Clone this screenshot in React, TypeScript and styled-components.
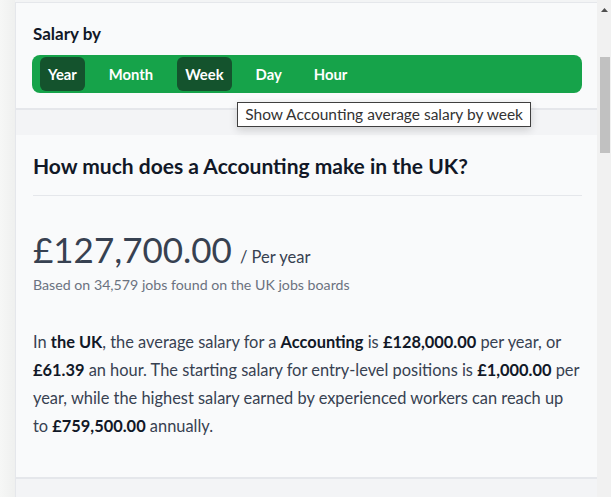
import React from "react";
import styled, { createGlobalStyle } from "styled-components";

const GlobalStyle = createGlobalStyle`
  html, body {
    margin: 0;
    padding: 0;
  }
  body {
    background: #f3f4f5;
    font-family: Lato, "Open Sans", sans-serif;
    color: #374151;
  }
`;

const Page = styled.div`
  padding: 2px 14px 0 15px;
  background: linear-gradient(to right, #f6f7f6 0, #eff0ef 15px, #f3f4f5 15px);
`;

const Column = styled.main`
  display: flex;
  flex-direction: column;
  gap: 25px;
  min-height: 2400px;
  background: #f3f4f6;
  border-left: 1px solid #e5e7eb;
  border-top: 1px solid #e5e7eb;
`;

const Card = styled.section<{ $pad: string }>`
  background: #f9fafb;
  border-bottom: 2px solid #e5e7eb;
  padding: ${({ $pad }) => $pad};
`;

const FilterTitle = styled.h3`
  margin: 0;
  font-size: 17px;
  line-height: 24px;
  font-weight: 700;
  color: #111827;
`;

const FilterBar = styled.div`
  display: flex;
  align-items: center;
  gap: 16px;
  margin: 9px 0 0 -1px;
  padding: 2px 8px;
  background: #16a34a;
  border-radius: 8px;
`;

const FilterButton = styled.button<{ $active?: boolean }>`
  position: relative;
  height: 34px;
  padding: 0 8px;
  border: 0;
  border-radius: 6px;
  background: ${({ $active }) => ($active ? "#14532d" : "transparent")};
  color: #ffffff;
  font-family: inherit;
  font-size: 14.8px;
  font-weight: 700;
  cursor: pointer;
`;

const Tooltip = styled.span`
  position: absolute;
  top: calc(100% + 11px);
  left: 60px;
  padding: 0 7px;
  height: 23px;
  line-height: 23px;
  white-space: nowrap;
  background: #ffffff;
  border: 1px solid #3f3f3f;
  box-shadow: 0 3px 8px rgba(0, 0, 0, 0.16);
  color: #333333;
  font-size: 15.5px;
  font-weight: 400;
  z-index: 10;
`;

const Heading = styled.h2`
  margin: 0;
  padding-bottom: 15px;
  border-bottom: 1px solid #e5e7eb;
  font-size: 21px;
  line-height: 28px;
  font-weight: 700;
  color: #111827;
`;

const PriceRow = styled.div`
  display: flex;
  align-items: baseline;
  gap: 8px;
  margin-top: 31px;
  height: 44px;
  line-height: 44px;
`;

const Price = styled.span`
  font-size: 35px;
  color: #374151;
`;

const PriceUnit = styled.span`
  font-size: 16.5px;
  line-height: 20px;
  color: #374151;
`;

const Note = styled.p`
  margin: 4px 0 0;
  font-size: 14.2px;
  line-height: 20px;
  color: #6b7280;
`;

const Summary = styled.p`
  margin: 33px 0 0;
  font-size: 16.4px;
  line-height: 28px;
  color: #374151;

  b {
    color: #111827;
  }
`;

const ScrollTrack = styled.div`
  position: fixed;
  top: 0;
  right: 0;
  bottom: 0;
  width: 14px;
  background: #f1f1f1;
  z-index: 20;
`;

const ScrollArrow = styled.svg`
  display: block;
  margin: 8px auto 0 4px;
`;

const ScrollThumb = styled.div`
  position: absolute;
  top: 57px;
  left: 3px;
  right: 1px;
  height: 96px;
  background: #c1c1c1;
`;

const periods = ["Year", "Month", "Week", "Day", "Hour"];
const active = ["Year", "Week"];

export default function App() {
  return (
    <>
      <GlobalStyle />
      <Page>
        <Column>
          <Card $pad="19px 15px 15px 17px">
            <FilterTitle>Salary by</FilterTitle>
            <FilterBar>
              {periods.map((p) => (
                <FilterButton key={p} $active={active.includes(p)}>
                  {p}
                  {p === "Week" && (
                    <Tooltip>Show Accounting average salary by week</Tooltip>
                  )}
                </FilterButton>
              ))}
            </FilterBar>
          </Card>
          <Card $pad="17px 15px 37px 17px">
            <Heading>How much does a Accounting make in the UK?</Heading>
            <PriceRow>
              <Price>£127,700.00</Price>
              <PriceUnit>/ Per year</PriceUnit>
            </PriceRow>
            <Note>Based on 34,579 jobs found on the UK jobs boards</Note>
            <Summary>
              In <b>the UK</b>, the average salary for a <b>Accounting</b> is{" "}
              <b>£128,000.00</b> per year, or <b>£61.39</b> an hour. The starting
              salary for entry-level positions is <b>£1,000.00</b> per year, while
              the highest salary earned by experienced workers can reach up to{" "}
              <b>£759,500.00</b> annually.
            </Summary>
          </Card>
        </Column>
      </Page>
      <ScrollTrack>
        <ScrollArrow width="7" height="4" viewBox="0 0 7 4">
          <path d="M3.5 0 L7 4 L0 4 Z" fill="#505050" />
        </ScrollArrow>
        <ScrollThumb />
      </ScrollTrack>
    </>
  );
}
